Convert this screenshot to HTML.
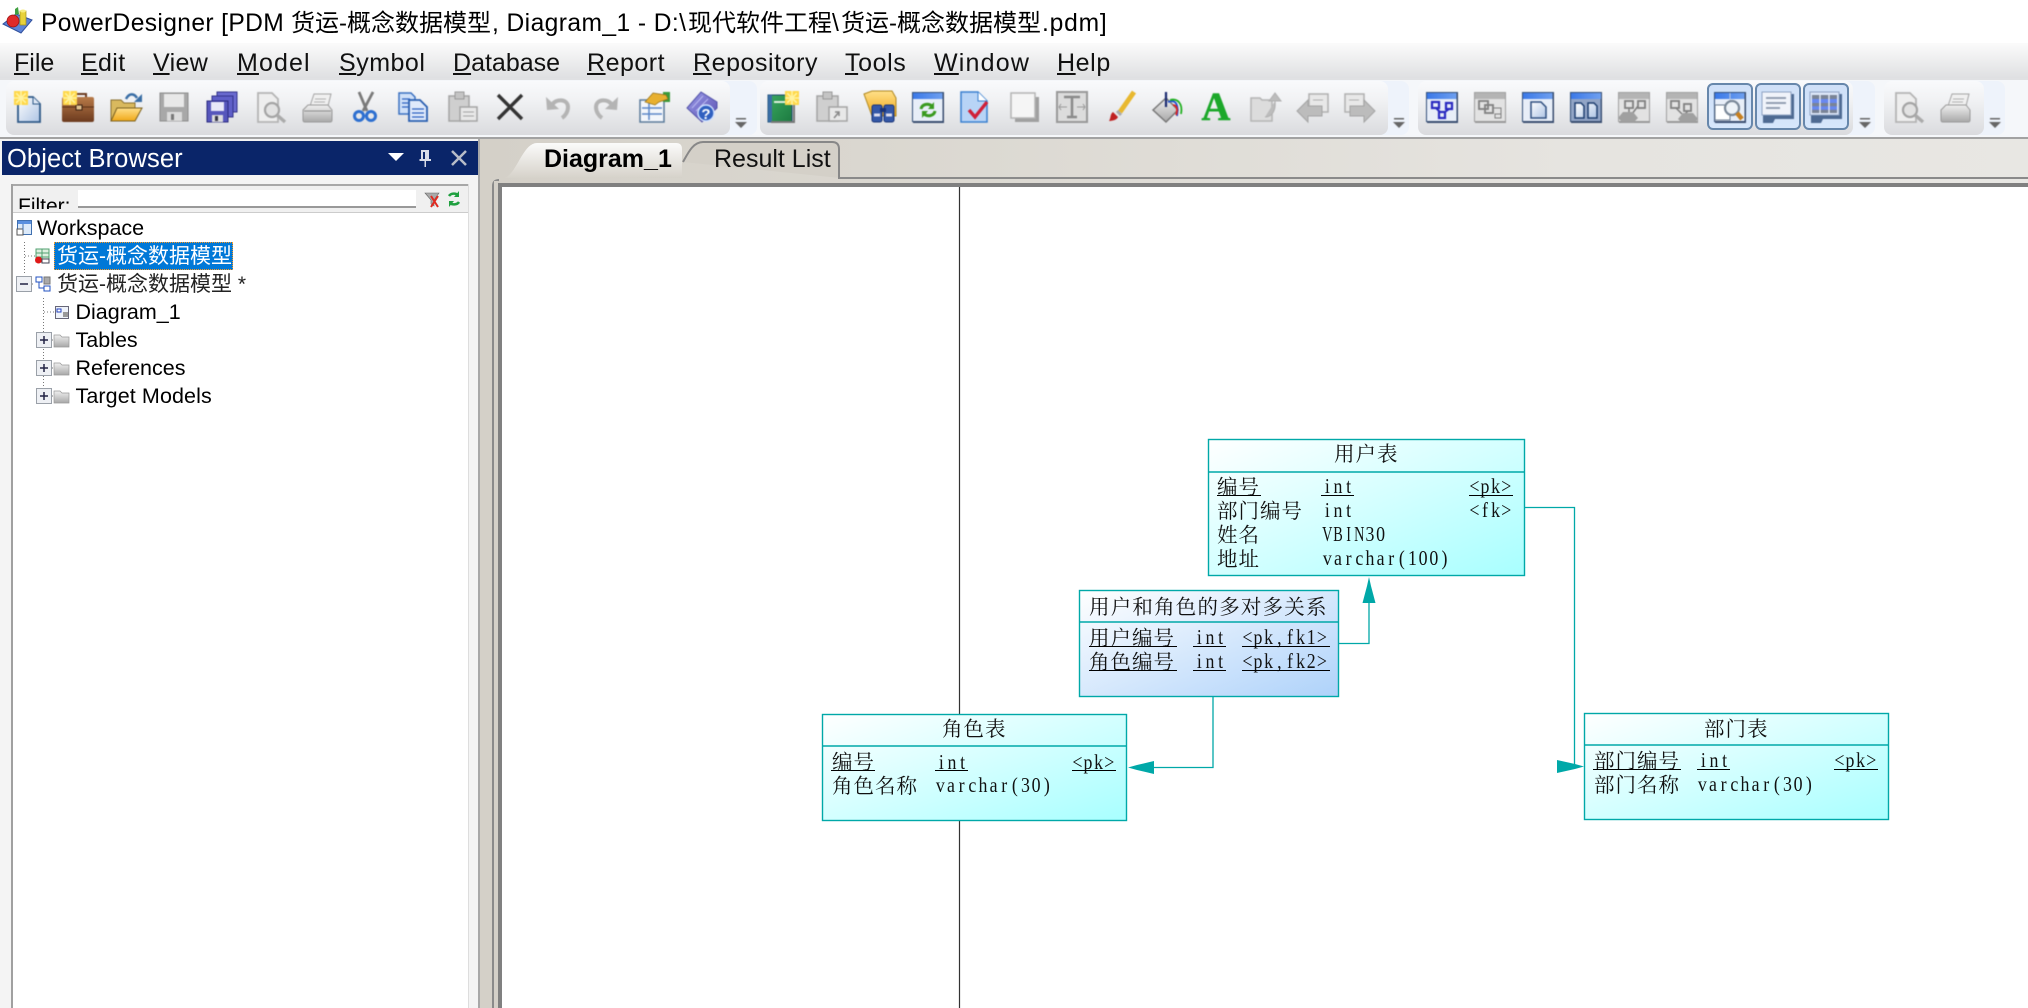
<!DOCTYPE html>
<html lang="zh"><head><meta charset="utf-8"><title>PowerDesigner</title>
<style>
html,body{margin:0;padding:0;background:#fff}
#app{position:relative;width:2028px;height:1008px;overflow:hidden;background:#fff;font-family:"Liberation Sans","Noto Sans CJK SC",sans-serif;color:#000}
.a{position:absolute;white-space:pre;line-height:1}
.t{font-size:24.6px;top:12px;letter-spacing:.37px}
.cj{font-size:24px;letter-spacing:0}
#menu{position:absolute;left:0;top:43px;width:2028px;height:35px;background:linear-gradient(#fbfbfb,#dfe0e2)}
.m{position:absolute;top:6px;font-size:25px;line-height:28px;color:#111;white-space:pre;letter-spacing:.35px}
#tbbg{position:absolute;left:0;top:78px;width:2028px;height:59px;background:#f5f7fa;border-top:2px solid #e0e1e3;box-sizing:border-box}
.grp{position:absolute;top:81px;height:54px;border-radius:8px;background:linear-gradient(#f9fafc,#f1f2f4 35%,#dadbde)}
.chv{position:absolute;top:81px;height:54px;background:#eef3fb;border-radius:0 8px 8px 0}
.act{position:absolute;top:83px;width:46px;height:47px;box-sizing:border-box;border:2.5px solid #6787ab;border-radius:6px;background:linear-gradient(#cfe0f8,#d6e6fb)}
#gline{position:absolute;left:0;top:137px;width:2028px;height:2px;background:#a2a2a2}
#strip{position:absolute;left:478px;top:139px;width:1550px;height:869px;background:linear-gradient(90deg,#d4d0c8 0,#dcd9d2 500px,#e6e4e0 1100px,#e8e7e3 100%)}
#obh{position:absolute;left:2px;top:141px;width:476px;height:34px;background:#0a2569;color:#fff}
#panel{position:absolute;left:0;top:139px;width:478px;height:869px;background:#f4f4f4}
#inner{position:absolute;left:11px;top:184px;width:458px;height:824px;background:#fff;border-left:2px solid #a0a0a0;border-right:1px solid #ddd;box-sizing:border-box}
#ftb{position:absolute;left:13px;top:184px;width:455px;height:29px;background:#f0f0f0;border-top:2px solid #a8a8a8;border-bottom:1px solid #ccc;box-sizing:border-box;overflow:hidden}
.tr{font-size:21.5px;color:#000}
#sel{position:absolute;left:54px;top:242px;width:179px;height:28px;box-sizing:border-box;background:#0078d7;border:1px dotted #ff9a20}
#canvas{position:absolute;left:498px;top:183px;width:1530px;height:825px;box-sizing:border-box;border:4px solid #808080;border-right:0;border-bottom:0;background:#fff}
svg{position:absolute;left:0;top:0;overflow:visible}
.c{font-family:"Noto Serif CJK SC","Liberation Serif",serif;font-size:20.5px;letter-spacing:1px;fill:#111}
.l{font-family:"Liberation Serif",serif;font-size:21px;fill:#111;text-anchor:middle}
</style></head><body><div id="app">

<!-- Title bar -->
<svg width="40" height="40" style="left:2px;top:5px;filter:blur(.3px)">
<path d="M1 19L14 9 30 15 19 28z" fill="#5d84d8" stroke="#2f4f9c"/>
<circle cx="11" cy="16" r="6" fill="#e02a2a" stroke="#9a1010" stroke-width=".7"/>
<path d="M18 6h6v14h-6z" fill="#e8d23a" stroke="#a09018" stroke-width=".7"/><ellipse cx="21" cy="6" rx="3" ry="1.5" fill="#f6ec80"/>
<path d="M13 4l3-2 1 7-4 1z" fill="#40a040"/>
</svg>
<div class="a t" style="left:41px">PowerDesigner [PDM</div>
<div class="a t cj" style="left:291px">货运-概念数据模型</div>
<div class="a t" style="left:492px;letter-spacing:.42px">, Diagram_1 - D:\</div>
<div class="a t cj" style="left:688px">现代软件工程</div>
<div class="a t" style="left:832px">\</div>
<div class="a t cj" style="left:841px">货运-概念数据模型</div>
<div class="a t" style="left:1042px;letter-spacing:.8px">.pdm]</div>

<!-- Menu -->
<div id="menu">
<span class="m" style="left:14px;letter-spacing:0"><u>F</u>ile</span>
<span class="m" style="left:81px"><u>E</u>dit</span>
<span class="m" style="left:153px"><u>V</u>iew</span>
<span class="m" style="left:237px;letter-spacing:1.1px"><u>M</u>odel</span>
<span class="m" style="left:339px;letter-spacing:.5px"><u>S</u>ymbol</span>
<span class="m" style="left:453px;letter-spacing:0"><u>D</u>atabase</span>
<span class="m" style="left:587px;letter-spacing:.5px"><u>R</u>eport</span>
<span class="m" style="left:693px;letter-spacing:.55px"><u>R</u>epository</span>
<span class="m" style="left:845px;letter-spacing:.6px"><u>T</u>ools</span>
<span class="m" style="left:934px;letter-spacing:1.2px"><u>W</u>indow</span>
<span class="m" style="left:1057px;letter-spacing:.6px"><u>H</u>elp</span>
</div>

<!-- Toolbars -->
<div id="tbbg"></div>
<div class="chv" style="left:720px;width:37px"></div>
<div class="chv" style="left:1378px;width:31px"></div>
<div class="chv" style="left:1843px;width:32px"></div>
<div class="chv" style="left:1974px;width:31px"></div>
<div class="grp" style="left:6px;width:724px"></div>
<div class="grp" style="left:760px;width:628px"></div>
<div class="grp" style="left:1418px;width:435px"></div>
<div class="grp" style="left:1884px;width:100px"></div>
<div class="act" style="left:1707px"></div>
<div class="act" style="left:1755px"></div>
<div class="act" style="left:1803px"></div>
<div id="gline"></div>

<svg width="2028" height="140" style="filter:blur(.55px)">
<defs>
<linearGradient id="pap" x1="0" y1="0" x2="1" y2="1"><stop offset="0" stop-color="#fff"/><stop offset="1" stop-color="#aec4e4"/></linearGradient>
<linearGradient id="brw" x1="0" y1="0" x2="0" y2="1"><stop offset="0" stop-color="#b87a48"/><stop offset="1" stop-color="#6c3a1e"/></linearGradient>
<linearGradient id="yel" x1="0" y1="0" x2="0" y2="1"><stop offset="0" stop-color="#ffe08a"/><stop offset="1" stop-color="#f0a818"/></linearGradient>
<linearGradient id="gr" x1="0" y1="0" x2="0" y2="1"><stop offset="0" stop-color="#f0f0f0"/><stop offset="1" stop-color="#a8a8a8"/></linearGradient>
<linearGradient id="pur" x1="0" y1="0" x2="1" y2="1"><stop offset="0" stop-color="#9a9ae8"/><stop offset="1" stop-color="#5a50b0"/></linearGradient>
<linearGradient id="grn" x1="0" y1="0" x2="1" y2="1"><stop offset="0" stop-color="#3aa860"/><stop offset="1" stop-color="#1c7a40"/></linearGradient>
<linearGradient id="wb" x1="0" y1="0" x2="1" y2="0"><stop offset="0" stop-color="#3a78e8"/><stop offset="1" stop-color="#6fa0f0"/></linearGradient>
<symbol id="st" viewBox="0 0 13 13" width="14" height="14"><rect width="13" height="13" fill="#ffd84a"/><path d="M6.5 0v13M0 6.500h13M2 2l9 9M11 2l-9 9" stroke="#fff3a0" stroke-width="1.500"/></symbol>
<symbol id="win" viewBox="0 0 32 32" width="32" height="32"><rect x=".5" y="1.500" width="31" height="29" fill="#e8eef8" stroke="#34507a"/><rect x="1" y="2" width="30" height="6" fill="url(#wb)"/><path d="M1 31h31M31.500 2v29" stroke="#3a4e70" stroke-width="2"/></symbol>
<symbol id="wing" viewBox="0 0 32 32" width="32" height="32"><rect x=".5" y="1.500" width="31" height="29" fill="#e2e2e2" stroke="#a0a0a0"/><rect x="1" y="2" width="30" height="6" fill="#b4b4b4"/><path d="M1 31h31" stroke="#999" stroke-width="2"/></symbol>
</defs>
<g fill="none">
<!-- 1 new -->
<g transform="translate(13,91)"><path d="M5 6h15l7 7v18H5z" fill="url(#pap)" stroke="#2f5a88" stroke-width="1.800"/><path d="M20 6v7h7" fill="#dfe8f5" stroke="#2f5a88"/><use href="#st" x="1" y="0"/></g>
<!-- 2 briefcase -->
<g transform="translate(62,91)"><path d="M11 7V3h13v4" stroke="#6b3a20" stroke-width="2"/><rect y="6" width="32" height="25" rx="2" fill="url(#brw)"/><path d="M0 16h32" stroke="#5a3016"/><rect x="14" y="14" width="6" height="5" fill="#e0c090" stroke="#3a2010"/><use href="#st" x="1" y="0"/></g>
<!-- 3 open -->
<g transform="translate(110,91)"><path d="M1 30V9h10l3 3h11v6" fill="#d9b95e" stroke="#8a7030"/><path d="M1 30l6-13h25l-7 13z" fill="url(#yel)" stroke="#7a6020"/><path d="M16 8c3-6 8-6 11-1" stroke="#3a6ea5" stroke-width="2.500"/><path d="M32 3v8h-8z" fill="#3a6ea5"/></g>
<!-- 4 save -->
<g transform="translate(158,91)"><rect x="2" y="2" width="28" height="28" fill="#a8a8a8" stroke="#8c8c8c"/><rect x="6" y="3" width="20" height="13" fill="#e8e8e8"/><rect x="9" y="21" width="15" height="9" fill="#dcdcdc"/><rect x="13" y="23" width="3" height="6" fill="#777"/></g>
<!-- 5 save all -->
<g transform="translate(206,91)"><rect x="11" y="1" width="20" height="20" fill="#6a6ad0" stroke="#33338a"/><rect x="6" y="5" width="21" height="21" fill="#5f5fc8" stroke="#33338a"/><rect x="1" y="10" width="21" height="21" fill="#5656bc" stroke="#2a2a80"/><rect x="5" y="11" width="13" height="9" fill="#e8e8f8"/><rect x="6" y="24" width="11" height="7" fill="#ddd"/><rect x="9" y="25" width="3" height="5" fill="#334"/></g>
<!-- 6 preview -->
<g transform="translate(255,91)"><path d="M3 2h14l6 6v23H3z" fill="#eee" stroke="#b4b4b4" stroke-width="1.800"/><circle cx="17" cy="19" r="7" fill="#e2e2e2" stroke="#a4a4a4" stroke-width="2.200"/><path d="M22 24l8 7" stroke="#aaa" stroke-width="3.400"/></g>
<!-- 7 print -->
<g transform="translate(301,91)"><path d="M9 15l4-12h17l-3 12z" fill="#f0f0f0" stroke="#a4a4a4"/><path d="M14 8h11M13 11h11" stroke="#b0b0b0"/><path d="M2 19l5-5h20l4 5v10q0 2-2 2H4q-2 0-2-2z" fill="url(#gr)" stroke="#999"/><path d="M3 20h27" stroke="#8c8c8c"/></g>
<!-- 8 scissors -->
<g transform="translate(349,91)"><path d="M10 1l8 19M24 1l-10 19" stroke="#7a7a7a" stroke-width="2.800"/><circle cx="10" cy="25" r="4.500" stroke="#2d6fd0" stroke-width="3"/><circle cx="22" cy="25" r="4.500" stroke="#2d6fd0" stroke-width="3"/></g>
<!-- 9 copy -->
<g transform="translate(397,91)"><path d="M2 2h12l4 4v17H2z" fill="#cfe0f8" stroke="#3a70c0" stroke-width="1.500"/><path d="M12 9h11l7 7v14H12z" fill="#dfe9fb" stroke="#2a5fb0" stroke-width="1.800"/><path d="M5 8h8M5 12h6M5 16h6M15 18h12M15 22h12M15 26h12" stroke="#2a60c0" stroke-width="1.300"/></g>
<!-- 10 paste -->
<g transform="translate(446,91)"><rect x="3" y="5" width="20" height="25" fill="#cfcfcf" stroke="#a4a4a4" stroke-width="1.500"/><rect x="9" y="1" width="9" height="7" fill="#c4c4c4" stroke="#999"/><rect x="14" y="16" width="17" height="14" fill="#e8e8e8" stroke="#a4a4a4" stroke-width="1.500"/><path d="M17 21h11M17 25h11" stroke="#a4a4a4"/></g>
<!-- 11 X -->
<path d="M498 95l24 24M522 95l-24 24" stroke="#333" stroke-width="3.400"/>
<!-- 12 undo -->
<g transform="translate(543,91)"><path d="M9 14c4-7 16-6 16 2 0 5-3 9-6 11" stroke="#b4b4b4" stroke-width="4"/><path d="M3 6l1 13 12-1z" fill="#b4b4b4"/></g>
<!-- 13 redo -->
<g transform="translate(621,91) scale(-1,1)"><path d="M9 14c4-7 16-6 16 2 0 5-3 9-6 11" stroke="#b4b4b4" stroke-width="4"/><path d="M3 6l1 13 12-1z" fill="#b4b4b4"/></g>
<!-- 14 props -->
<g transform="translate(638,91)"><rect x="2" y="9" width="24" height="22" fill="#f3f6fb" stroke="#5a7a9a" stroke-width="1.500"/><path d="M4 17h20M4 23h20M11 12v17" stroke="#5b86c8" stroke-width="1.500"/><rect x="25" y="1" width="7" height="10" fill="#3a9a3a"/><path d="M7 11l8-9 13 2 2 4-9 3-4 3z" fill="#e8b030" stroke="#947018" stroke-width=".7"/></g>
<!-- 15 help -->
<g transform="translate(686,91)"><path d="M1 17L15 1l16 10v6L16 31z" fill="url(#pur)" stroke="#5050a8"/><path d="M6 17L17 5M10 20L22 8" stroke="#b8b8f0"/><circle cx="20" cy="22" r="8" fill="#3060c0" stroke="#cfe0ff" stroke-width="1.500"/><text x="20" y="28" font-family="Liberation Sans" font-weight="700" font-size="15" fill="#fff" text-anchor="middle">?</text></g>

<!-- Group 2 -->
<g transform="translate(767,91)"><path d="M1 4h24v27H1z" fill="url(#grn)" stroke="#1c4a6a"/><rect x="1" y="4" width="4" height="27" fill="#3a6ea5"/><path d="M7 11h14" stroke="#e0f0e0" stroke-width="2"/><path d="M27 11v20H4" stroke="#777" stroke-width="2"/><use href="#st" x="18" y="0"/></g>
<g transform="translate(816,91)"><rect x="1" y="5" width="21" height="25" fill="#cfcfcf" stroke="#a4a4a4" stroke-width="1.500"/><rect x="7" y="1" width="9" height="7" fill="#c4c4c4" stroke="#999"/><rect x="13" y="16" width="18" height="14" fill="#e8e8e8" stroke="#a4a4a4" stroke-width="1.500"/><path d="M18 27l5-6M23 25v-4h-4" stroke="#888" stroke-width="1.500"/></g>
<g transform="translate(864,91)"><path d="M0 3l8-3h20l4 7v18H8z" fill="url(#yel)" stroke="#b08820"/><rect x="8" y="14" width="10" height="17" rx="2" fill="#3458a8" stroke="#1a3478"/><rect x="20" y="14" width="10" height="17" rx="2" fill="#3458a8" stroke="#1a3478"/><path d="M10 24h6M22 24h6" stroke="#dde" stroke-width="3"/><rect x="16" y="17" width="6" height="4" fill="#1a3478"/></g>
<g transform="translate(912,91)"><use href="#win"/><path d="M9 18c1-5 7-6 11-3M23 20c-1 5-7 6-11 3" stroke="#3a9a20" stroke-width="3"/><path d="M22 11v7h-6zM10 27v-7h6z" fill="#3a9a20"/></g>
<g transform="translate(959,91)"><path d="M2 1h17l9 9v21H2z" fill="#b8d4f6" stroke="#3a80d0" stroke-width="1.500"/><path d="M19 1v9h9" fill="#fff" stroke="#3a80d0"/><path d="M10 19l6 7 12-15" stroke="#d02038" stroke-width="3.400"/></g>
<g transform="translate(1009,91)"><rect x="6" y="6" width="24" height="25" fill="#a0a0a0"/><rect x="2" y="2" width="24" height="25" fill="#f5f5f5" stroke="#b4b4b4" stroke-width="1.500"/></g>
<g transform="translate(1056,91)"><rect x="1" y="1" width="30" height="30" fill="#dcdcdc" stroke="#999" stroke-width="2"/><path d="M8 6h16M16 6v20M11 26h10" stroke="#8a8a8a" stroke-width="2.500"/><path d="M3 16h8M21 16h8M5 13l-2 3 2 3M27 13l2 3-2 3" stroke="#999"/></g>
<g transform="translate(1104,91)"><path d="M30 1L16 21" stroke="#e8b830" stroke-width="5"/><path d="M9 21l5 5c-1 3-6 4-9 4 2-3 1-7 4-9z" fill="#c02020"/><path d="M13 20l4 4" stroke="#aaa" stroke-width="3"/></g>
<g transform="translate(1152,91)"><path d="M1 19L14 7l12 12-12 12z" fill="url(#gr)" stroke="#777" stroke-width="1.500"/><path d="M14 1v15" stroke="#1a2a70" stroke-width="2.200"/><path d="M16 11c8-3 11 3 9 14" stroke="#2050d0" stroke-width="1.800"/><path d="M18 9c8-2 13 4 11 14" stroke="#20b020" stroke-width="1.800"/><path d="M21 14c4 0 5 5 3 10" stroke="#e02020" stroke-width="1.800"/></g>
<g transform="translate(1200,91)"><text x="16" y="29" font-family="Liberation Serif" font-weight="700" font-size="40" fill="#1ca82a" stroke="#1ca82a" stroke-width=".6" text-anchor="middle">A</text></g>
<g transform="translate(1249,91)"><path d="M2 7h9l2 2h10v21H2z" fill="#dcdcdc" stroke="#b4b4b4" stroke-width="1.500"/><path d="M16 26c8 0 11-8 10-16M20 10l6-8 6 8z" fill="#bcbcbc" stroke="#b0b0b0"/></g>
<g transform="translate(1296,91)"><rect x="13" y="3" width="19" height="18" fill="#e8e8e8" stroke="#b0b0b0" stroke-width="1.500"/><path d="M17 9h10" stroke="#b0b0b0"/><path d="M1 20L12 9v6h14v10H12v6z" fill="#bcbcbc" stroke="#a4a4a4"/></g>
<g transform="translate(1344,91)"><rect x="1" y="3" width="19" height="18" fill="#e8e8e8" stroke="#b0b0b0" stroke-width="1.500"/><path d="M5 9h10" stroke="#b0b0b0"/><path d="M31 20L20 9v6H6v10h14v6z" fill="#bcbcbc" stroke="#a4a4a4"/></g>

<!-- Group 3 -->
<g transform="translate(1426,91)"><use href="#win"/><rect x="6" y="11" width="7" height="6" stroke="#2a2ac0" stroke-width="2.200"/><rect x="20" y="12" width="6" height="6" stroke="#2a2ac0" stroke-width="2.200"/><rect x="13" y="21" width="6" height="6" stroke="#2a2ac0" stroke-width="2.200"/><path d="M10 17l4 4M23 18l-4 3" stroke="#2a2ac0" stroke-width="2"/></g>
<g transform="translate(1474,91)"><use href="#wing"/><rect x="5" y="10" width="9" height="8" stroke="#808080" stroke-width="1.800"/><rect x="11" y="14" width="8" height="8" stroke="#808080" stroke-width="1.800"/><rect x="21" y="23" width="6" height="4" stroke="#808080"/><path d="M19 17h8v6" stroke="#808080"/></g>
<g transform="translate(1522,91)"><use href="#win"/><path d="M9 11h10l5 5v11H9z" fill="url(#pap)" stroke="#2f4f80" stroke-width="1.500"/></g>
<g transform="translate(1570,91)"><use href="#win"/><rect x="1" y="2" width="30" height="28" fill="#4a6a9c" opacity=".55"/><rect x="1" y="2" width="30" height="6" fill="url(#wb)"/><path d="M5 12h6l3 3v12H5zM18 12h6l3 3v12h-9z" fill="url(#pap)" stroke="#1f3f70" stroke-width="1.500"/></g>
<g transform="translate(1618,91)"><use href="#wing"/><rect x="7" y="10" width="8" height="7" stroke="#808080" stroke-width="1.800"/><rect x="20" y="10" width="7" height="7" stroke="#808080" stroke-width="1.800"/><path d="M11 17v5M20 15l-6 8" stroke="#808080" stroke-width="1.500"/><path d="M0 27l5-6h10l5 6-4 4H4z" fill="#a0a0a0"/></g>
<g transform="translate(1666,91)"><use href="#wing"/><rect x="5" y="10" width="8" height="7" stroke="#808080" stroke-width="1.800"/><rect x="18" y="13" width="7" height="7" stroke="#808080" stroke-width="1.800"/><path d="M10 17l6 6M22 20l-3 3" stroke="#808080" stroke-width="1.500"/><path d="M12 28l5-6h10l5 6-3 3H15z" fill="#a0a0a0"/></g>
<g transform="translate(1714,91)"><use href="#win"/><path d="M16 2v28" stroke="#c0cee4"/><rect x="1" y="14" width="15" height="15" fill="#fff" stroke="#6a7a90"/><circle cx="18" cy="17" r="7" fill="#eef3f8" stroke="#7a8898" stroke-width="2.200"/><path d="M23 22l5 6" stroke="#c88020" stroke-width="4.500"/></g>
<g transform="translate(1762,91)"><path d="M1 3h31v25H13l-2 4H1z" fill="#4e6a92"/><path d="M0 1h29v23H0z" fill="#f0f3fa" stroke="#8ea2c2"/><path d="M4 7h20M4 12h20M4 17h14" stroke="#8895aa" stroke-width="1.700"/></g>
<g transform="translate(1810,91)"><path d="M1 3h31v25H13l-2 4H1z" fill="#4e6a92"/><path d="M0 1h29v23H0z" fill="#dce6f8" stroke="#8ea2c2"/><rect x="2" y="4" width="25" height="18" fill="#7a8496"/><path d="M2 10h25" stroke="#6888f0" stroke-width="4"/><path d="M2 17h25" stroke="#6888f0" stroke-width="3.500"/><path d="M10 4v18M19 4v18" stroke="#e8eef8" stroke-width="1.300"/></g>
<!-- Group 4 -->
<g transform="translate(1893,91)"><path d="M3 2h14l6 6v23H3z" fill="#eee" stroke="#b4b4b4" stroke-width="1.800"/><circle cx="17" cy="19" r="7" fill="#e2e2e2" stroke="#a4a4a4" stroke-width="2.200"/><path d="M22 24l8 7" stroke="#aaa" stroke-width="3.400"/></g>
<g transform="translate(1939,91)"><path d="M9 15l4-12h17l-3 12z" fill="#f0f0f0" stroke="#a4a4a4"/><path d="M14 8h11M13 11h11" stroke="#b0b0b0"/><path d="M2 19l5-5h20l4 5v10q0 2-2 2H4q-2 0-2-2z" fill="url(#gr)" stroke="#999"/></g>

<!-- chevrons -->
<g fill="#666">
<path d="M736 118h10v1.500h-10zM735 122h12l-6 6z"/>
<path d="M1394 118h10v1.500h-10zM1393 122h12l-6 6z"/>
<path d="M1860 118h10v1.500h-10zM1859 122h12l-6 6z"/>
<path d="M1990 118h10v1.500h-10zM1989 122h12l-6 6z"/>
</g>
</g>
</svg>

<!-- Object browser -->
<div id="panel"></div>
<div id="obh"></div>
<div class="a" style="left:7px;top:146px;font-size:25.500px;color:#fff;line-height:26px;letter-spacing:.1px">Object Browser</div>
<svg width="478" height="180">
<path d="M388 153h16l-8 8z" fill="#fff"/>
<path d="M421 150h8v9h2v2h-5v6h-1.500v-6h-5v-2h1.500zM423 152v7h2v-7z" fill="#d8dce8"/>
<path d="M452 151l14 14M466 151l-14 14" stroke="#b8bcc8" stroke-width="2.500"/>
</svg>
<div id="inner"></div>
<div id="ftb"><div style="position:absolute;left:5px;top:0;width:56px;height:23px;overflow:hidden"><div class="a" style="left:0;top:10px;font-size:21px;color:#000">Filter:</div></div>
<div style="position:absolute;left:65px;top:4px;width:338px;height:18px;background:#fff;border-bottom:2px solid #999;box-sizing:border-box"></div></div>
<svg width="478" height="420">
<path d="M425 193h14l-5 7v6l-3-2v-4z" fill="#aaa" stroke="#666" stroke-width=".6"/><path d="M431 196l7 11M438 196l-7 11" stroke="#e02a20" stroke-width="2"/>
<path d="M449 196c2-3 7-3 9-1M459 202c-2 3-7 3-9 1" stroke="#20a040" stroke-width="2.500" fill="none"/><path d="M459 191v6h-5zM449 207v-6h5z" fill="#20a040"/>
<!-- tree lines -->
<path d="M24.500 242v33M25 256h10M43.500 298v92M44 312h10M52 340h2M52 368h2M52 396h2M32 284h3" stroke="#777" stroke-dasharray="1 2" fill="none"/>
<!-- workspace icon -->
<rect x="17.500" y="220.500" width="14" height="14" fill="#dceafa" stroke="#4070b0"/><rect x="18" y="221" width="13" height="3" fill="#5a90e0"/><rect x="17" y="229" width="6" height="6" fill="#fff" stroke="#555"/><path d="M23 224v6" stroke="#4070b0"/>
<!-- model icon selected -->
<rect x="36" y="249" width="13" height="13" fill="#dff0e0" stroke="#50a070"/><path d="M36 253h13M36 257h13M42 249v13" stroke="#50a070"/><circle cx="38.500" cy="260" r="3.500" fill="#e01818"/><rect x="42" y="259" width="7" height="4" fill="#fff" stroke="#445"/>
<!-- minus -->
<rect x="16.500" y="276.500" width="15" height="15" fill="#eef0f4" stroke="#9aa0a8"/><path d="M20 284h8" stroke="#224" stroke-width="1.500"/>
<!-- pdm icon -->
<rect x="36" y="277" width="6" height="5" fill="#fff" stroke="#2050c0"/><rect x="44" y="286" width="6" height="5" fill="#fff" stroke="#2050c0"/><path d="M39 282v6h5" stroke="#2050c0" fill="none"/><rect x="44" y="277" width="6" height="7" fill="#aaa" stroke="#777"/>
<!-- diagram icon -->
<rect x="55.500" y="306.500" width="13" height="12" fill="#eef2fa" stroke="#667"/><rect x="57" y="309" width="4" height="3" stroke="#2040c0" fill="#fff"/><rect x="63" y="312" width="5" height="5" fill="#999"/>
<!-- plus/folder -->
<g><rect x="36.500" y="332.500" width="15" height="15" fill="#eef0f4" stroke="#9aa0a8"/><path d="M40 340h8M44 336v8" stroke="#224" stroke-width="1.500"/><path d="M54 335h6l2 2h7v10H54z" fill="url(#gr)" stroke="#999" stroke-width=".7"/></g>
<g transform="translate(0,28)"><rect x="36.500" y="332.500" width="15" height="15" fill="#eef0f4" stroke="#9aa0a8"/><path d="M40 340h8M44 336v8" stroke="#224" stroke-width="1.500"/><path d="M54 335h6l2 2h7v10H54z" fill="url(#gr)" stroke="#999" stroke-width=".7"/></g>
<g transform="translate(0,56)"><rect x="36.500" y="332.500" width="15" height="15" fill="#eef0f4" stroke="#9aa0a8"/><path d="M40 340h8M44 336v8" stroke="#224" stroke-width="1.500"/><path d="M54 335h6l2 2h7v10H54z" fill="url(#gr)" stroke="#999" stroke-width=".7"/></g>
</svg>
<div class="a tr" style="left:37px;top:218px">Workspace</div>
<div id="sel"></div>
<div class="a tr" style="left:57px;top:246px;color:#fff;font-size:21px">货运-概念数据模型</div>
<div class="a tr" style="left:57px;top:274px;font-size:21px;color:#222">货运-概念数据模型 <span style="font-family:'Liberation Sans'">*</span></div>
<div class="a tr" style="left:75.500px;top:302px">Diagram_1</div>
<div class="a tr" style="left:75.500px;top:330px">Tables</div>
<div class="a tr" style="left:75.500px;top:358px">References</div>
<div class="a tr" style="left:75.500px;top:386px;letter-spacing:.1px">Target Models</div>

<!-- Right pane / tabs -->
<div id="strip"></div>
<svg width="2028" height="1008">
<defs>
<linearGradient id="tabg" x1="0" y1="0" x2="0" y2="1"><stop offset="0" stop-color="#fbfbfa"/><stop offset="1" stop-color="#d6d2ca"/></linearGradient>
<linearGradient id="tg" x1="0" y1="0" x2="1" y2="1"><stop offset="0" stop-color="#fff"/><stop offset="1" stop-color="#a8ffff"/></linearGradient>
<linearGradient id="rg" x1="0" y1="0" x2="1" y2="1"><stop offset="0" stop-color="#fff"/><stop offset="1" stop-color="#aed2fa"/></linearGradient>
</defs>
<path d="M478 139h2v869h-2z" fill="#a8a8a8"/>
<path d="M840 178H2028" stroke="#8a8a8a" stroke-width="2"/>
<path d="M683 162c5-9 10-20 20-20H832q7 0 7 7v29h1" fill="#d4d0c8" stroke="#888" stroke-width="2"/>
<path d="M505 178c12-5 18-35 32-35H676q6 0 6 6v29z" fill="url(#tabg)"/>
<path d="M493 1008V186q0-6 6-6" stroke="#8a8a8a" stroke-width="2" fill="none"/>
<rect x="494" y="181" width="4" height="827" fill="#d4d0c8"/>
</svg>
<div class="a" style="left:544px;top:146px;font-size:25px;font-weight:700;line-height:26px">Diagram_1</div>
<div class="a" style="left:714px;top:146px;font-size:25px;line-height:26px;color:#111">Result List</div>
<div id="canvas"></div>

<!-- Diagram -->
<svg width="2028" height="1008">
<path d="M959.500 187V1008" stroke="#333" stroke-width="1.200"/>
<g fill="none" stroke="#00a8a8" stroke-width="1.300">
<path d="M1369 603V643.500H1339"/>
<path d="M1525 507.500H1574.500V766H1557"/>
<path d="M1213 697V767.500H1154"/>
</g>
<g fill="#00a8a8">
<path d="M1369 577L1371 586 1375.500 603H1362.500L1367 586z"/>
<path d="M1128 767.500L1137 765 1154 761V774L1137 770z"/>
<path d="M1584 766.500L1575 764 1557 760V773L1575 769z"/>
</g>
<g stroke="#00a8a8" stroke-width="1.400">
<rect x="1208.500" y="439.500" width="316" height="136" fill="url(#tg)"/><path d="M1208 472H1525"/>
<rect x="1079.500" y="590.500" width="259" height="106" fill="url(#rg)"/><path d="M1079 622H1339"/>
<rect x="822.500" y="714.500" width="304" height="106" fill="url(#tg)"/><path d="M822 746H1127"/>
<rect x="1584.500" y="713.500" width="304" height="106" fill="url(#tg)"/><path d="M1584 745H1889"/>
</g>
<!-- 用户表 -->
<text class="c" x="1334" y="461">用户表</text>
<text class="c" x="1217" y="494">编号</text><text class="l" transform="translate(1322,493) scale(.85,1)" x="6.3 18.8 31.3">int</text><text class="l" transform="translate(1469,493) scale(.85,1)" x="6.3 18.8 31.3 43.9">&lt;pk&gt;</text>
<text class="c" x="1217" y="518">部门编号</text><text class="l" transform="translate(1322,517) scale(.85,1)" x="6.3 18.8 31.3">int</text><text class="l" transform="translate(1469,517) scale(.85,1)" x="6.3 18.8 31.3 43.9">&lt;fk&gt;</text>
<text class="c" x="1217" y="542">姓名</text><text class="l" transform="translate(1322,541) scale(.68,1)" x="7.8 23.5 39.2 54.8">VBIN</text><text class="l" transform="translate(1364.600,541) scale(.85,1)" x="6.3 18.8">30</text>
<text class="c" x="1217" y="566">地址</text><text class="l" transform="translate(1322,565) scale(.85,1)" x="6.3 18.8 31.3 43.9 56.4 68.9 81.4 94 106.5 119 131.6 144.1">varchar(100)</text>
<path d="M1217 495.500h44M1321 495.500h33M1469 495.500h44" stroke="#000" stroke-width="1.100"/>
<!-- 关系表 -->
<text class="c" x="1089" y="614" style="letter-spacing:1.2px">用户和角色的多对多关系</text>
<text class="c" x="1089" y="645">用户编号</text><text class="l" transform="translate(1194,644) scale(.85,1)" x="6.3 18.8 31.3">int</text><text class="l" transform="translate(1242,644) scale(.85,1)" x="6.3 18.8 31.3 43.9 56.4 68.9 81.4 94">&lt;pk,fk1&gt;</text>
<text class="c" x="1089" y="669">角色编号</text><text class="l" transform="translate(1194,668) scale(.85,1)" x="6.3 18.8 31.3">int</text><text class="l" transform="translate(1242,668) scale(.85,1)" x="6.3 18.8 31.3 43.9 56.4 68.9 81.4 94">&lt;pk,fk2&gt;</text>
<path d="M1089 646.500h88M1193 646.500h33M1242 646.500h88M1089 670.500h88M1193 670.500h33M1242 670.500h88" stroke="#000" stroke-width="1.100"/>
<!-- 角色表 -->
<text class="c" x="942" y="736">角色表</text>
<text class="c" x="832" y="769">编号</text><text class="l" transform="translate(936,769) scale(.85,1)" x="6.3 18.8 31.3">int</text><text class="l" transform="translate(1072,769) scale(.85,1)" x="6.3 18.8 31.3 43.9">&lt;pk&gt;</text>
<text class="c" x="832" y="793">角色名称</text><text class="l" transform="translate(935,792) scale(.85,1)" x="6.3 18.8 31.3 43.9 56.4 68.9 81.4 94 106.5 119 131.6">varchar(30)</text>
<path d="M831 770.500h44M935 770.500h33M1072 770.500h44" stroke="#000" stroke-width="1.100"/>
<!-- 部门表 -->
<text class="c" x="1704" y="736">部门表</text>
<text class="c" x="1594" y="768">部门编号</text><text class="l" transform="translate(1698,767) scale(.85,1)" x="6.3 18.8 31.3">int</text><text class="l" transform="translate(1834,767) scale(.85,1)" x="6.3 18.8 31.3 43.9">&lt;pk&gt;</text>
<text class="c" x="1594" y="792">部门名称</text><text class="l" transform="translate(1697,791) scale(.85,1)" x="6.3 18.8 31.3 43.9 56.4 68.9 81.4 94 106.5 119 131.6">varchar(30)</text>
<path d="M1593 769.500h88M1697 769.500h33M1834 769.500h44" stroke="#000" stroke-width="1.100"/>
</svg>
</div></body></html>
